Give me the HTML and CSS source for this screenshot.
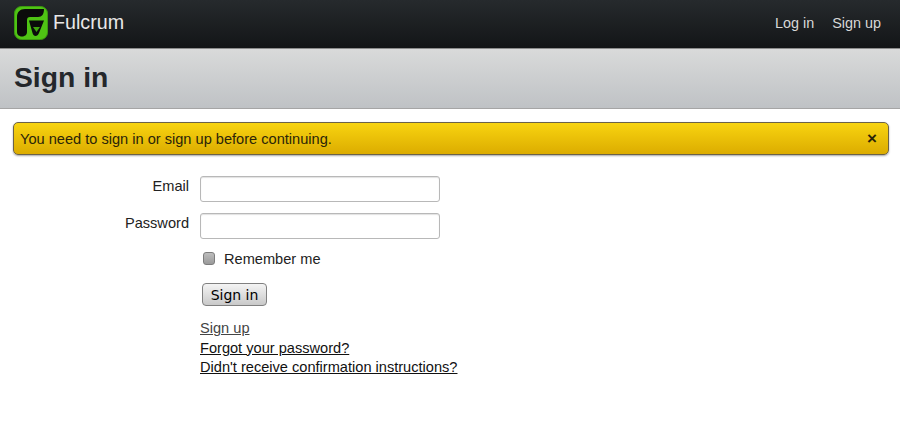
FILE: index.html
```html
<!DOCTYPE html>
<html lang="en">
<head>
<meta charset="UTF-8">
<meta name="viewport" content="width=device-width, initial-scale=1.0">
<title>Sign in - Fulcrum</title>
<link rel="stylesheet" href="styles.css">
</head>
<body>
<header class="topbar">
    <a class="brand" href="#">
        <svg class="logo" width="34" height="34" viewBox="0 0 34 34">
            <rect x="0.5" y="0.5" width="33" height="33" rx="7" fill="#4fc414" stroke="#3c9a10"/>
            <path d="M3 26V11C3 6 6 3 11 3H30C30 8 28 11 24 11H16C14 11 13 12 13 14V26C13 32 3 32 3 26Z" fill="#0b0b0b"/>
            <path d="M15 14.500H30L25 27C23.500 31 19.500 31 18.500 27Z" fill="#0b0b0b"/>
            <path d="M19 21H26L22.500 26Z" fill="#3fa50f"/>
        </svg>
        <span class="brand-name">Fulcrum</span>
    </a>
    <nav class="topnav">
        <a href="#">Log in</a>
        <a href="#">Sign up</a>
    </nav>
</header>

<div class="page-title">
    <h1>Sign in</h1>
</div>

<div class="flash">
    <span>You need to sign in or sign up before continuing.</span>
    <a class="flash-close" href="#">&times;</a>
</div>

<form class="signin" onsubmit="return false">
    <div class="field">
        <label for="email">Email</label>
        <input type="text" id="email">
    </div>
    <div class="field">
        <label for="password">Password</label>
        <input type="password" id="password">
    </div>
    <div class="remember">
        <span class="fake-check"></span>
        <span>Remember me</span>
    </div>
    <button class="submit" type="submit">Sign in</button>
    <div class="links">
        <a class="muted" href="#">Sign up</a>
        <a href="#">Forgot your password?</a>
        <a href="#">Didn't receive confirmation instructions?</a>
    </div>
</form>
</body>
</html>
```

FILE: styles.css
```css
body {
    margin: 0;
    font-family: "Liberation Sans", Arial, sans-serif;
    font-size: 14.6px;
    color: #222;
    background-color: #fff;
}

.topbar {
    height: 48px;
    padding: 0 19px 0 14px;
    display: flex;
    justify-content: space-between;
    align-items: center;
    background: linear-gradient(#262a2d, #131517);
    border-bottom: 1px solid #8c8c8c;
}

.brand {
    display: flex;
    align-items: center;
    gap: 5px;
    margin-top: -3px;
    color: #e8e8e8;
    text-decoration: none;
}

.brand-name {
    font-size: 19.7px;
}

.topnav {
    display: flex;
    gap: 18px;
    margin-top: -2px;
}

.topnav a {
    font-size: 14.4px;
    color: #d8d8d8;
    text-decoration: none;
}

.page-title {
    height: 59px;
    padding: 0 14px;
    display: flex;
    align-items: center;
    background: linear-gradient(#d9dada, #bfc2c5);
    border-bottom: 1px solid #a5a5a5;
}

.page-title h1 {
    margin: 0 0 2px;
    font-size: 28.3px;
    font-weight: bold;
    color: #24272b;
}

.flash {
    height: 31px;
    margin: 13px 11px 0 13px;
    padding: 0 11px 0 6px;
    display: flex;
    justify-content: space-between;
    align-items: center;
    background: linear-gradient(#f8d410, #dcac00);
    border: 1px solid #6b6248;
    border-radius: 5px;
    box-shadow: 0 1px 2px rgba(0, 0, 0, 0.35);
    color: #2b2508;
}

.flash-close {
    font-size: 17px;
    font-weight: bold;
    color: #2b2508;
    text-decoration: none;
}

.signin {
    margin-top: 21px;
    padding-left: 200px;
}

.field {
    position: relative;
    height: 26px;
    margin-bottom: 11px;
}

.field label {
    position: absolute;
    right: 100%;
    top: 2px;
    margin-right: 11px;
    white-space: nowrap;
}

.field input {
    box-sizing: border-box;
    display: block;
    width: 240px;
    height: 26px;
    padding: 2px 6px;
    background-color: #fff;
    border: 1px solid #b8b8b8;
    border-radius: 3px;
    box-shadow: inset 0 1px 1px rgba(0, 0, 0, 0.12);
}

.remember {
    display: flex;
    align-items: center;
    gap: 9px;
    height: 18px;
    margin-left: 3px;
}

.fake-check {
    box-sizing: border-box;
    width: 12px;
    height: 13px;
    margin-top: -1px;
    background: linear-gradient(#bdbdbd, #9a9a9a);
    border: 1px solid #7d7d7d;
    border-radius: 3px;
}

.submit {
    display: block;
    box-sizing: border-box;
    width: 65px;
    height: 23px;
    margin: 15px 0 0 2px;
    padding: 0;
    font-family: "DejaVu Sans", Verdana, sans-serif;
    font-size: 14px;
    color: #000;
    background: linear-gradient(#f4f4f4, #c9c9c9);
    border: 1px solid #808080;
    border-radius: 4px;
}

.links {
    display: flex;
    flex-direction: column;
    align-items: flex-start;
    margin-top: 13px;
    line-height: 19.5px;
}

.links a {
    color: #111;
}

.links a.muted {
    color: #444;
}
```
